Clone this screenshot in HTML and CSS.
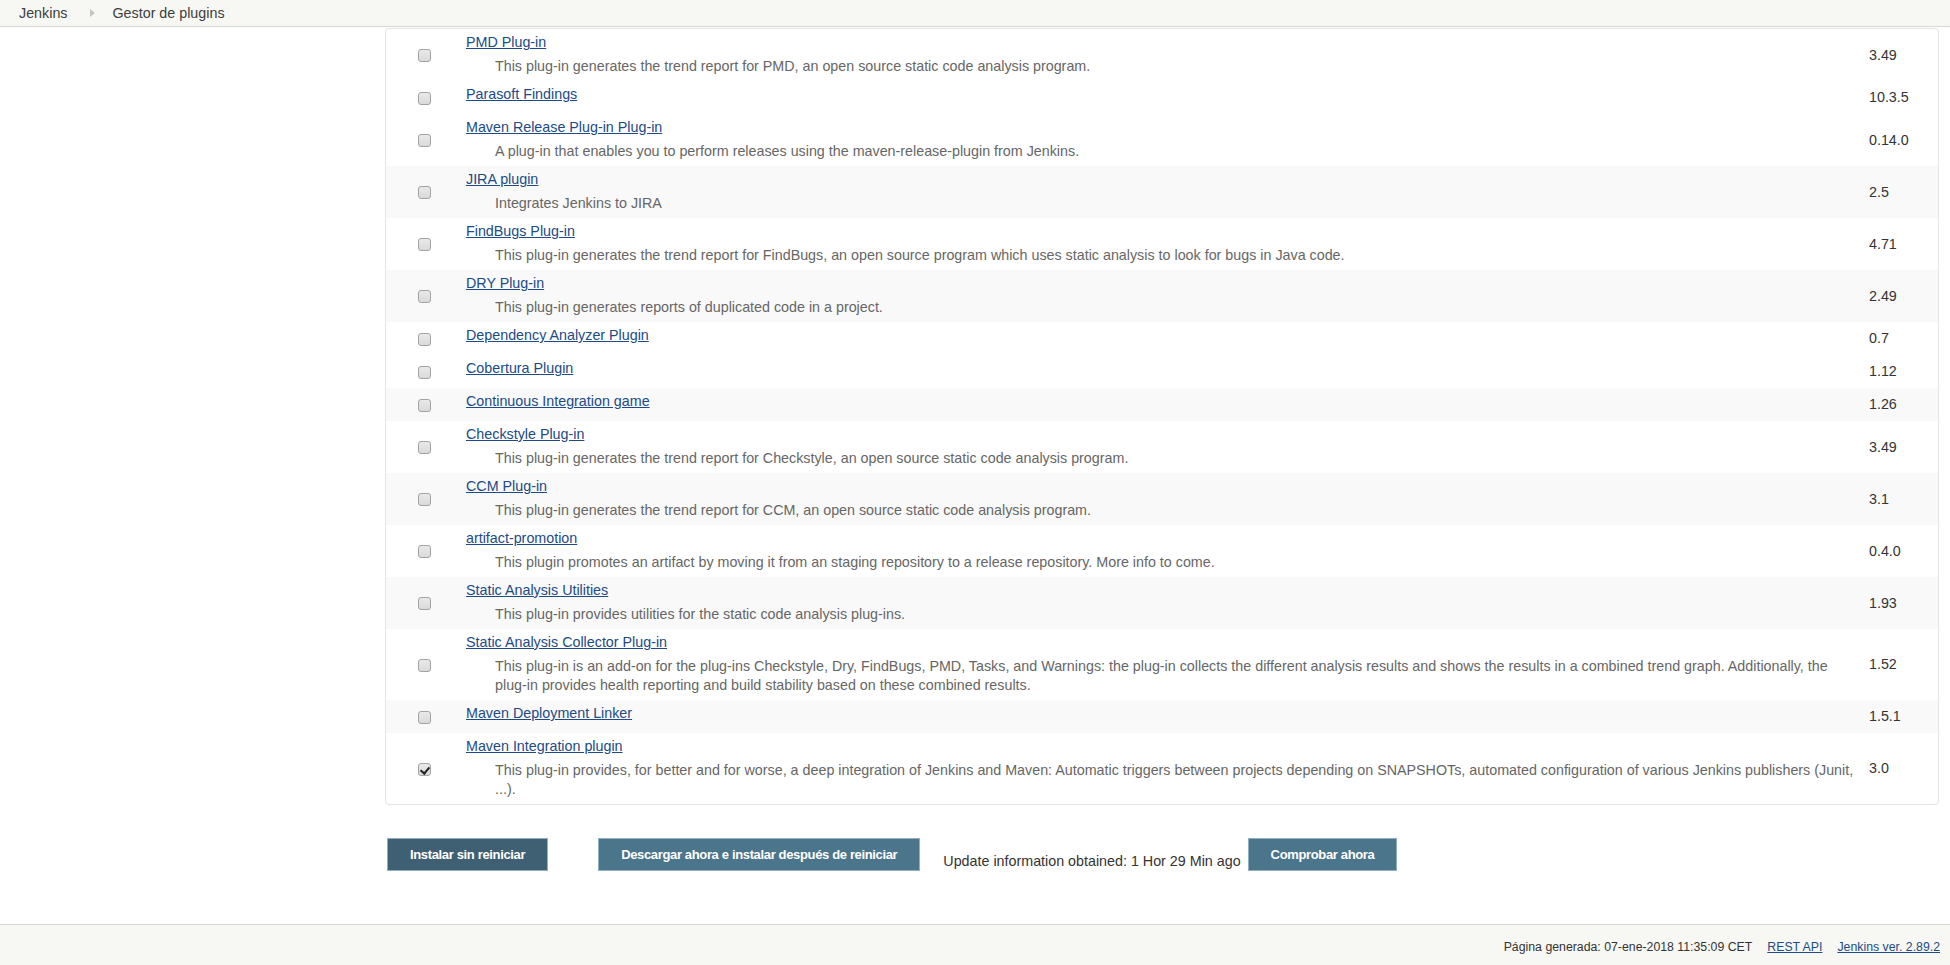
FILE: index.html
```html
<!DOCTYPE html>
<html lang="es">
<head>
<meta charset="utf-8">
<title>Gestor de plugins [Jenkins]</title>
<link rel="stylesheet" href="styles.css">
</head>
<body>
<header class="top-bar">
  <nav class="breadcrumbs">
    <a class="crumb" href="#">Jenkins</a>
    <svg class="crumb-sep" width="5" height="8" viewBox="0 0 5 8"><path d="M0 0 L5 4 L0 8 Z" fill="#c4c4c4"/></svg>
    <a class="crumb" href="#">Gestor de plugins</a>
  </nav>
</header>

<div class="page">
  <aside class="side-panel"></aside>
  <main class="main-panel">
    <table class="plugins">
      <tbody>
        <tr>
          <td class="cb-cell"><input type="checkbox" class="cb"></td>
          <td class="name-cell"><div class="title"><a href="#">PMD Plug-in</a></div><div class="excerpt">This plug-in generates the trend report for PMD, an open source static code analysis program.</div></td>
          <td class="ver-cell">3.49</td>
        </tr>
        <tr>
          <td class="cb-cell"><input type="checkbox" class="cb"></td>
          <td class="name-cell"><div class="title"><a href="#">Parasoft Findings</a></div></td>
          <td class="ver-cell">10.3.5</td>
        </tr>
        <tr>
          <td class="cb-cell"><input type="checkbox" class="cb"></td>
          <td class="name-cell"><div class="title"><a href="#">Maven Release Plug-in Plug-in</a></div><div class="excerpt">A plug-in that enables you to perform releases using the maven-release-plugin from Jenkins.</div></td>
          <td class="ver-cell">0.14.0</td>
        </tr>
        <tr class="alt">
          <td class="cb-cell"><input type="checkbox" class="cb"></td>
          <td class="name-cell"><div class="title"><a href="#">JIRA plugin</a></div><div class="excerpt">Integrates Jenkins to JIRA</div></td>
          <td class="ver-cell">2.5</td>
        </tr>
        <tr>
          <td class="cb-cell"><input type="checkbox" class="cb"></td>
          <td class="name-cell"><div class="title"><a href="#">FindBugs Plug-in</a></div><div class="excerpt">This plug-in generates the trend report for FindBugs, an open source program which uses static analysis to look for bugs in Java code.</div></td>
          <td class="ver-cell">4.71</td>
        </tr>
        <tr class="alt">
          <td class="cb-cell"><input type="checkbox" class="cb"></td>
          <td class="name-cell"><div class="title"><a href="#">DRY Plug-in</a></div><div class="excerpt">This plug-in generates reports of duplicated code in a project.</div></td>
          <td class="ver-cell">2.49</td>
        </tr>
        <tr>
          <td class="cb-cell"><input type="checkbox" class="cb"></td>
          <td class="name-cell"><div class="title"><a href="#">Dependency Analyzer Plugin</a></div></td>
          <td class="ver-cell">0.7</td>
        </tr>
        <tr>
          <td class="cb-cell"><input type="checkbox" class="cb"></td>
          <td class="name-cell"><div class="title"><a href="#">Cobertura Plugin</a></div></td>
          <td class="ver-cell">1.12</td>
        </tr>
        <tr class="alt">
          <td class="cb-cell"><input type="checkbox" class="cb"></td>
          <td class="name-cell"><div class="title"><a href="#">Continuous Integration game</a></div></td>
          <td class="ver-cell">1.26</td>
        </tr>
        <tr>
          <td class="cb-cell"><input type="checkbox" class="cb"></td>
          <td class="name-cell"><div class="title"><a href="#">Checkstyle Plug-in</a></div><div class="excerpt">This plug-in generates the trend report for Checkstyle, an open source static code analysis program.</div></td>
          <td class="ver-cell">3.49</td>
        </tr>
        <tr class="alt">
          <td class="cb-cell"><input type="checkbox" class="cb"></td>
          <td class="name-cell"><div class="title"><a href="#">CCM Plug-in</a></div><div class="excerpt">This plug-in generates the trend report for CCM, an open source static code analysis program.</div></td>
          <td class="ver-cell">3.1</td>
        </tr>
        <tr>
          <td class="cb-cell"><input type="checkbox" class="cb"></td>
          <td class="name-cell"><div class="title"><a href="#">artifact-promotion</a></div><div class="excerpt">This plugin promotes an artifact by moving it from an staging repository to a release repository. More info to come.</div></td>
          <td class="ver-cell">0.4.0</td>
        </tr>
        <tr class="alt">
          <td class="cb-cell"><input type="checkbox" class="cb"></td>
          <td class="name-cell"><div class="title"><a href="#">Static Analysis Utilities</a></div><div class="excerpt">This plug-in provides utilities for the static code analysis plug-ins.</div></td>
          <td class="ver-cell">1.93</td>
        </tr>
        <tr>
          <td class="cb-cell"><input type="checkbox" class="cb"></td>
          <td class="name-cell"><div class="title"><a href="#">Static Analysis Collector Plug-in</a></div><div class="excerpt">This plug-in is an add-on for the plug-ins Checkstyle, Dry, FindBugs, PMD, Tasks, and Warnings: the plug-in collects the different analysis results and shows the results in a combined trend graph. Additionally, the plug-in provides health reporting and build stability based on these combined results.</div></td>
          <td class="ver-cell">1.52</td>
        </tr>
        <tr class="alt">
          <td class="cb-cell"><input type="checkbox" class="cb"></td>
          <td class="name-cell"><div class="title"><a href="#">Maven Deployment Linker</a></div></td>
          <td class="ver-cell">1.5.1</td>
        </tr>
        <tr>
          <td class="cb-cell"><input type="checkbox" class="cb" checked></td>
          <td class="name-cell"><div class="title"><a href="#">Maven Integration plugin</a></div><div class="excerpt">This plug-in provides, for better and for worse, a deep integration of Jenkins and Maven: Automatic triggers between projects depending on SNAPSHOTs, automated configuration of various Jenkins publishers (Junit, ...).</div></td>
          <td class="ver-cell">3.0</td>
        </tr>
      </tbody>
    </table>

    <div class="actions">
      <button class="btn btn-primary btn-install">Instalar sin reiniciar</button>
      <button class="btn">Descargar ahora e instalar después de reiniciar</button>
      <span class="update-info">Update information obtained: 1 Hor 29 Min ago</span>
      <button class="btn">Comprobar ahora</button>
    </div>
  </main>
</div>

<footer class="footer">
  <span class="generated">Página generada: 07-ene-2018 11:35:09 CET</span>
  <a href="#">REST API</a>
  <a href="#">Jenkins ver. 2.89.2</a>
</footer>
</body>
</html>
```
FILE: styles.css
```css
* { box-sizing: border-box; }

html, body {
  margin: 0;
  padding: 0;
  background: #ffffff;
}

body {
  font-family: "Liberation Sans", Arial, Helvetica, sans-serif;
  font-size: 14.3px;
  line-height: 19px;
  color: #333333;
}

a { color: #204a87; }

/* top breadcrumb bar */
.top-bar {
  height: 27px;
  background: #f7f8f3;
  border-bottom: 1px solid #d6d9d1;
  display: flex;
  align-items: center;
  padding-left: 19px;
}

.breadcrumbs {
  display: flex;
  align-items: center;
}

.crumb {
  color: #3d3d3d;
  text-decoration: none;
}

.crumb-sep {
  margin: 0 17px 0 23px;
}

/* page layout */
.page {
  display: flex;
}

.side-panel {
  flex: none;
  width: 385px;
}

.main-panel {
  flex: 1;
  min-width: 0;
  padding: 1px 11px 53px 0;
}

/* plugin table */
.plugins {
  width: 100%;
  border-collapse: separate;
  border-spacing: 0;
  border: 1px solid #e4e4e4;
  border-radius: 4px;
}

.plugins tr.alt td {
  background: #f9f9f9;
}

.plugins td {
  padding: 0;
}

.cb-cell {
  width: 77px;
  text-align: center;
  vertical-align: middle;
}

.name-cell {
  padding: 4px 3px 5px 3px !important;
  vertical-align: top;
}

.ver-cell {
  width: 76px;
  padding-left: 7px !important;
  vertical-align: middle;
  color: #333333;
}

.title {
  margin-bottom: 5px;
}

.excerpt {
  margin: 0 3px 0 29px;
  color: #666666;
}

.cb {
  -webkit-appearance: none;
  appearance: none;
  display: inline-block;
  width: 13px;
  height: 13px;
  margin: 0;
  vertical-align: middle;
  border: 1px solid #a3a3a3;
  border-radius: 3px;
  background: linear-gradient(#e9e9e9, #dadada);
  position: relative;
}

.cb:checked::after {
  content: "";
  position: absolute;
  left: 3px;
  top: 1px;
  width: 4px;
  height: 7px;
  border-right: 2px solid #222;
  border-bottom: 2px solid #222;
  transform: rotate(40deg);
}

/* action buttons */
.actions {
  display: flex;
  align-items: flex-end;
  margin-top: 33px;
  padding-left: 2px;
}

.btn {
  height: 33px;
  padding: 0 22px;
  background: #4b758b;
  color: #ffffff;
  border: 1px solid #90afc2;
  border-radius: 0;
  font-family: "Liberation Sans", Arial, sans-serif;
  font-weight: bold;
  font-size: 13px;
  letter-spacing: -0.35px;
  cursor: pointer;
}

.btn-primary {
  background: #3f6073;
}

.btn-install {
  margin-right: 50px;
}

.update-info {
  margin: 0 7px 0 23px;
  color: #333333;
}

/* footer */
.footer {
  background: #f7f8f3;
  border-top: 1px solid #d6d9d1;
  height: 41px;
  display: flex;
  justify-content: flex-end;
  gap: 15px;
  padding: 14px 10px 0 0;
  font-size: 12.3px;
  line-height: 17px;
  color: #333333;
}
```
